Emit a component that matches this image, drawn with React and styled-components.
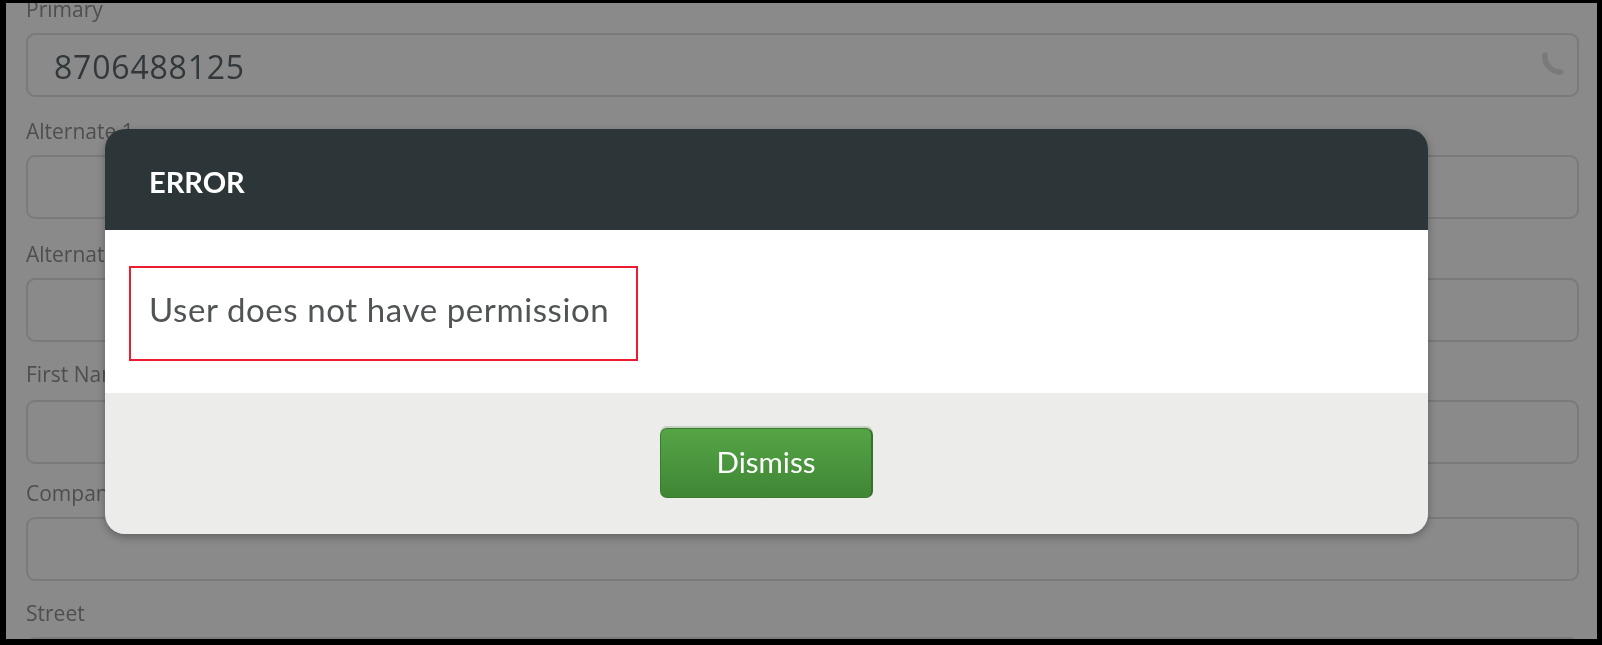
import React from 'react'
import styled, { createGlobalStyle, css } from 'styled-components'

const GlobalStyle = createGlobalStyle`
  html, body {
    margin: 0;
    height: 100%;
    background: #000;
    overflow: hidden;
  }
`;

// the source is a low-res capture, so text and thin lines are soft
const soft = css`
  filter: blur(0.7px);
`;

const Shell = styled.div`
  position: relative;
  box-sizing: border-box;
  width: 1591px;
  height: 636px;
  margin: 3px 0 0 6px;
  background: #8a8a8a;
  overflow: hidden;
  font-family: "Open Sans", sans-serif;
`;

const Form = styled.div`
  display: grid;
  grid-template-rows: 122px 123px 120px 119px 120px 60px;
  margin-top: -6px;
  padding: 0 18px 0 20px;
`;

const Row = styled.div`
  display: flex;
  flex-direction: column;
`;

const Label = styled.div`
  height: 24px;
  margin-bottom: ${(p) => p.$gap || 12}px;
  font-size: 21px;
  line-height: 24px;
  color: #4e4e4e;
  ${soft}
`;

const InputBox = styled.div`
  position: relative;
  box-sizing: border-box;
  display: flex;
  align-items: center;
  height: 64px;
  padding: 2px 0 0 26px;
  border: 2px solid #7a7a7a;
  border-radius: 9px;
`;

const Value = styled.span`
  font-size: 32px;
  letter-spacing: 0.8px;
  color: #31373a;
  ${soft}
`;

const PhoneIcon = styled.svg`
  position: absolute;
  right: 12px;
  top: 17px;
  width: 24px;
  height: 24px;
  ${soft}
`;

const Modal = styled.div`
  position: absolute;
  left: 99px;
  top: 126px;
  width: 1323px;
  height: 405px;
  display: flex;
  flex-direction: column;
  border-radius: 20px;
  overflow: hidden;
  box-shadow: 0 3px 9px rgba(0, 0, 0, 0.3);
  font-family: Lato, sans-serif;
`;

const ModalHead = styled.div`
  flex: 0 0 101px;
  box-sizing: border-box;
  display: flex;
  align-items: center;
  padding: 3px 0 0 44px;
  background: #2c3638;
`;

const HeadText = styled.span`
  color: #fff;
  font-size: 29px;
  font-weight: 700;
  ${soft}
`;

const ModalBody = styled.div`
  flex: 0 0 163px;
  box-sizing: border-box;
  display: flex;
  align-items: center;
  padding: 3px 0 0 24px;
  background: #fff;
`;

const Highlight = styled.div`
  box-sizing: border-box;
  display: flex;
  align-items: center;
  width: 509px;
  height: 95px;
  padding: 0 0 8px 18px;
  border: 2px solid #ed1c2e;
`;

const Message = styled.span`
  font-size: 33px;
  letter-spacing: 0.6px;
  color: #505455;
  ${soft}
`;

const ModalFoot = styled.div`
  flex: 1;
  display: flex;
  justify-content: center;
  align-items: flex-start;
  padding-top: 35px;
  background: #ecedeb;
`;

const DismissButton = styled.button`
  width: 213px;
  height: 70px;
  padding: 0 0 4px;
  border: 1px solid #3b7a31;
  border-right: 2px solid #35702c;
  border-radius: 7px;
  background: linear-gradient(#55a546, #3f8635);
  box-shadow: 0 -2px 0 #c4cfc0;
  font-family: inherit;
`;

const ButtonText = styled.span`
  color: #fff;
  font-size: 29.5px;
  ${soft}
`;

const fields = [
  { label: 'Primary', value: '8706488125', phone: true },
  { label: 'Alternate 1' },
  { label: 'Alternate 2' },
  { label: 'First Name', gap: 14 },
  { label: 'Company' },
  { label: 'Street' },
]

function App() {
  return (
    <Shell>
      <GlobalStyle />
      <Form>
        {fields.map((f) => (
          <Row key={f.label}>
            <Label $gap={f.gap}>{f.label}</Label>
            <InputBox>
              {f.value && <Value>{f.value}</Value>}
              {f.phone && (
                <PhoneIcon viewBox="0 0 24 24" fill="none">
                  <path d="M4 3C3 12 10 20 20 20" stroke="#7a7a7a" strokeWidth="5.5" strokeLinecap="round" />
                </PhoneIcon>
              )}
            </InputBox>
          </Row>
        ))}
      </Form>
      <Modal>
        <ModalHead><HeadText>ERROR</HeadText></ModalHead>
        <ModalBody>
          <Highlight><Message>User does not have permission</Message></Highlight>
        </ModalBody>
        <ModalFoot>
          <DismissButton><ButtonText>Dismiss</ButtonText></DismissButton>
        </ModalFoot>
      </Modal>
    </Shell>
  )
}

export default App;
